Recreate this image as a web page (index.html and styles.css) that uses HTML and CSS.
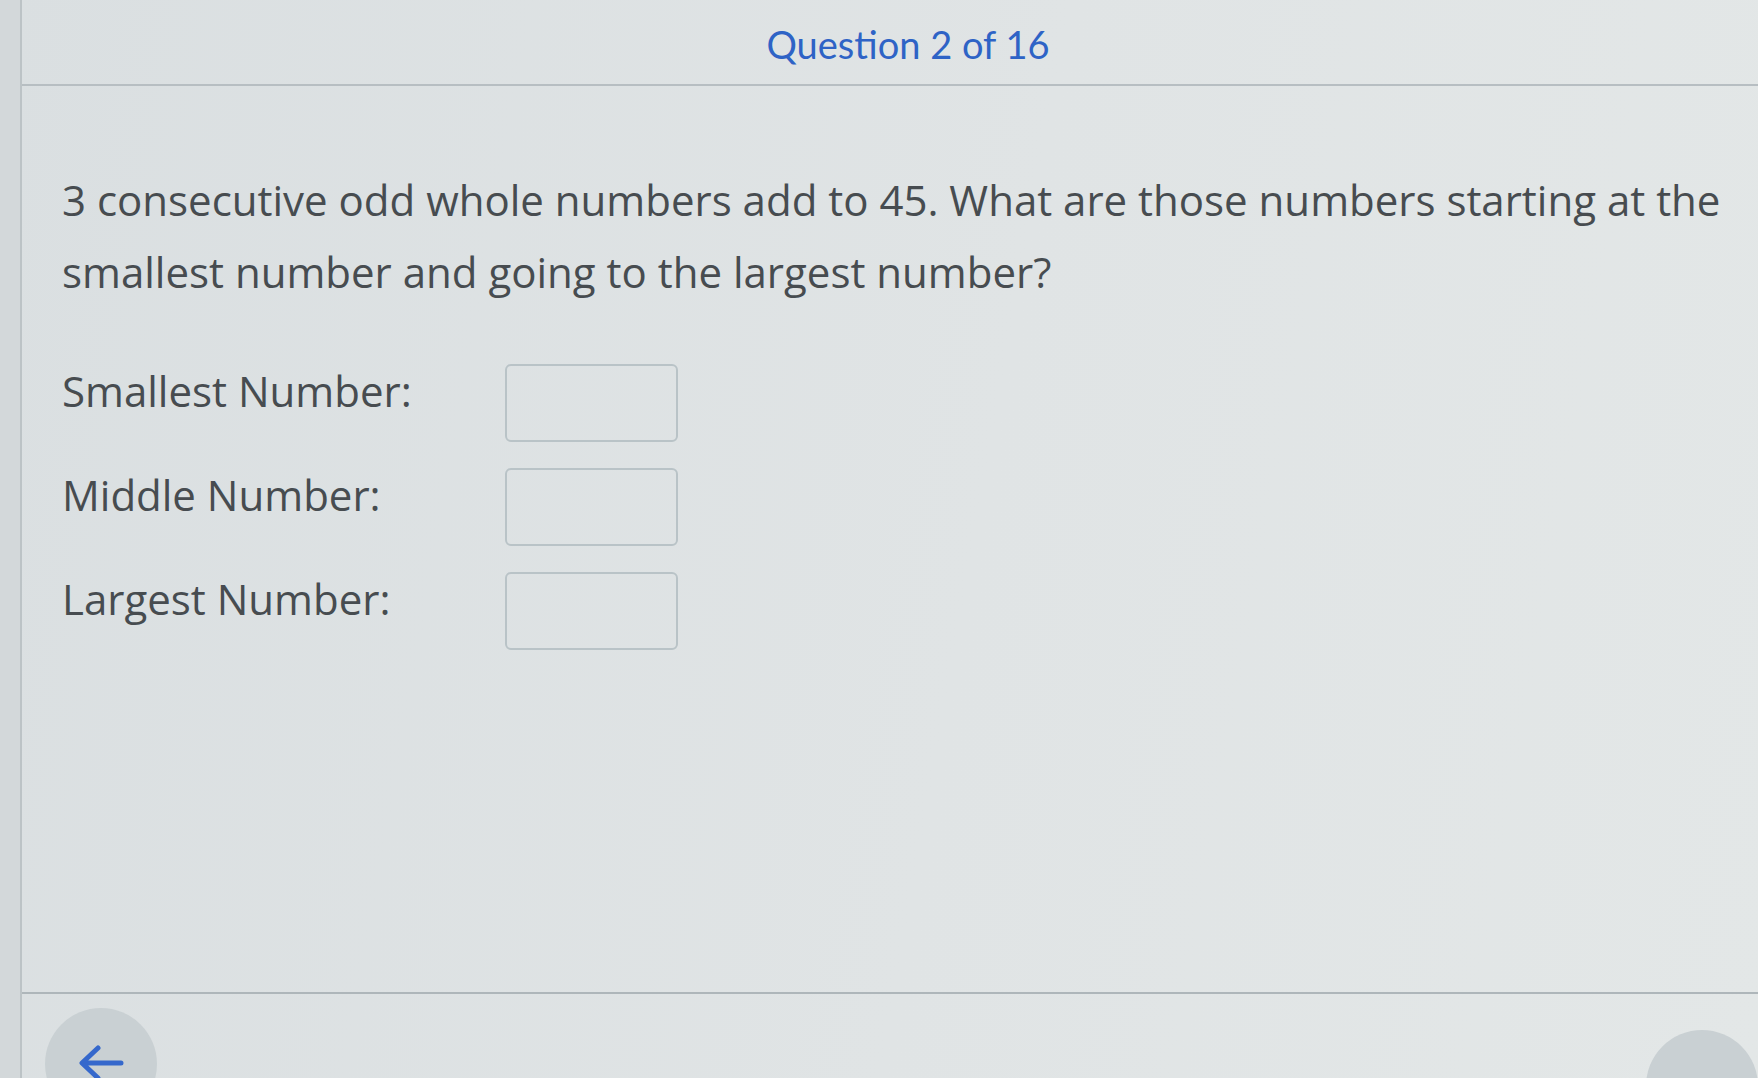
FILE: index.html
```html
<!DOCTYPE html>
<html lang="en">
<head>
    <meta charset="UTF-8">
    <meta name="viewport" content="width=device-width, initial-scale=1.0">
    <title>Question 2 of 16</title>
    <link rel="stylesheet" href="styles.css">
</head>
<body>
    <div class="app">
        <div class="rail"></div>

        <div class="main">
            <div class="header">
                <h1 class="counter">Question 2 of 16</h1>
            </div>

            <div class="content">
                <p class="question">3 consecutive odd whole numbers add to 45. What are those numbers starting at the smallest number and going to the largest number?</p>

                <form class="answers">
                    <div class="answer-row">
                        <label for="smallest">Smallest Number:</label>
                        <input type="text" id="smallest" name="smallest">
                    </div>
                    <div class="answer-row">
                        <label for="middle">Middle Number:</label>
                        <input type="text" id="middle" name="middle">
                    </div>
                    <div class="answer-row">
                        <label for="largest">Largest Number:</label>
                        <input type="text" id="largest" name="largest">
                    </div>
                </form>
            </div>

            <div class="footer">
                <button class="nav-btn" type="button" aria-label="Previous question">
                    <svg width="48" height="42" viewBox="0 0 48 42">
                        <path d="M44 21 H6 M21 6 L5 21 L21 36" fill="none" stroke="#3568cc" stroke-width="5" stroke-linecap="round" stroke-linejoin="round"/>
                    </svg>
                </button>
                <button class="nav-btn nav-next" type="button" aria-label="Next question"></button>
            </div>
        </div>
    </div>
</body>
</html>
```

FILE: styles.css
```css
body {
    margin: 0;
    font-family: 'Open Sans', 'Noto Sans', sans-serif;
    background: linear-gradient(100deg, #dadfe1 0%, #e0e4e5 55%, #e3e7e7 100%);
    color: #474c50;
    overflow: hidden;
}

.app {
    display: flex;
    height: 100vh;
    overflow: hidden;
}

.rail {
    width: 20px;
    background: #d3d8da;
    border-right: 2px solid #bcc3c6;
}

.main {
    flex: 1;
    display: flex;
    flex-direction: column;
    overflow: hidden;
}

.header {
    height: 84px;
    display: flex;
    align-items: center;
    justify-content: center;
    padding-left: 36px;
    border-bottom: 2px solid #b7bec2;
}

.counter {
    margin: 4px 0 0 0;
    font-family: 'Lato', sans-serif;
    font-weight: 400;
    font-size: 38px;
    color: #2e63c6;
}

.content {
    flex: 1;
    padding: 78px 10px 0 40px;
}

.question {
    margin: 0 0 56px 0;
    font-size: 42px;
    line-height: 72px;
}

.answers {
    display: flex;
    flex-direction: column;
    gap: 26px;
}

.answer-row {
    display: flex;
    align-items: flex-start;
}

.answer-row label {
    width: 443px;
    font-size: 42px;
    line-height: 54px;
}

.answer-row input {
    width: 169px;
    height: 74px;
    box-sizing: content-box;
    padding: 0;
    border: 2px solid #b9c3c7;
    border-radius: 6px;
    background: transparent;
    font-size: 32px;
}

.footer {
    height: 70px;
    flex-shrink: 0;
    display: flex;
    justify-content: space-between;
    align-items: flex-start;
    padding: 14px 45px 0 23px;
    border-top: 2px solid #aeb6ba;
    overflow: hidden;
}

.nav-btn {
    width: 112px;
    height: 112px;
    flex-shrink: 0;
    border: none;
    border-radius: 50%;
    background: #c9d0d3;
    display: flex;
    justify-content: center;
    padding-top: 34px;
    box-sizing: border-box;
}

.nav-next {
    margin-top: 22px;
    margin-right: -45px;
}
```
